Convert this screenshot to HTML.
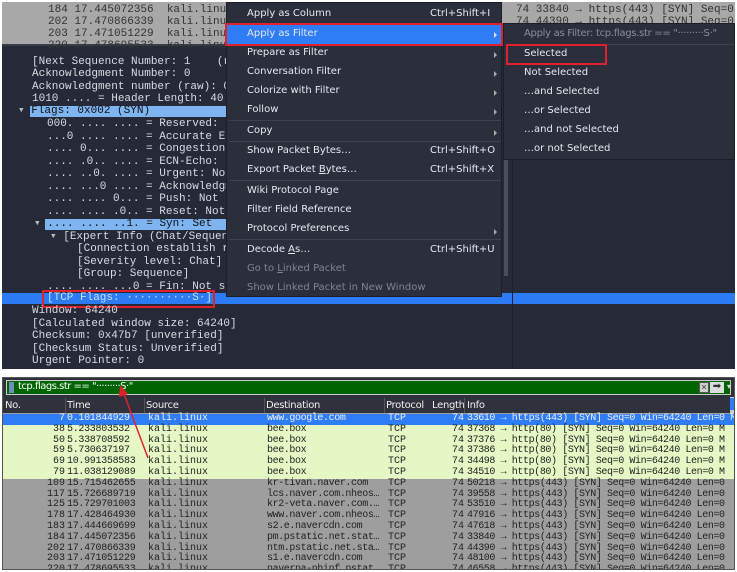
<!DOCTYPE html>
<html><head><meta charset="utf-8"><style>
*{margin:0;padding:0;box-sizing:border-box}
body{width:737px;height:572px;background:#fff;position:relative;overflow:hidden;font-family:"Liberation Sans",sans-serif}
.abs{position:absolute;white-space:pre}
#top{position:absolute;left:2px;top:2px;width:733px;height:367px;background:#262a38;overflow:hidden}
#plist{position:absolute;left:0;top:0;width:733px;height:44px;background:#a8a8a8;border-bottom:2px solid #3a3d48}
.pl{position:absolute;font:11px "Liberation Mono",monospace;color:#333;white-space:pre}
.tr{position:absolute;font:11px "Liberation Mono",monospace;color:#d8dbe2;white-space:pre;height:12.5px;line-height:12.5px}
#menu{position:absolute;left:224px;top:0;width:276px;height:295px;background:#2b2f3c;border:1px solid #1c1f28}
.mi{position:absolute;left:20px;font:10px "DejaVu Sans","Liberation Sans",sans-serif;color:#e6e8ee;white-space:pre}
.sc{position:absolute;left:203px;font:10px "DejaVu Sans",sans-serif;color:#e6e8ee}
.ar{position:absolute;left:267px;width:0;height:0;border-left:3px solid #aaa;border-top:3px solid transparent;border-bottom:3px solid transparent}
.sep{position:absolute;left:2px;width:272px;height:1px;background:#3d4150}
#sub{position:absolute;left:501px;top:21px;width:232px;height:137px;background:#2b2f3c;border:1px solid #1c1f28}
.si{position:absolute;left:20px;font:10px "DejaVu Sans",sans-serif;color:#e6e8ee;white-space:pre}
.red{position:absolute;border:2px solid #e0202a}
#bot{position:absolute;left:2px;top:377px;width:733px;height:193px;background:#9e9e9e;overflow:hidden;border:1px solid #555}
.row{position:absolute;left:0;width:733px;height:10.8px;font:10px "Liberation Mono",monospace;color:#222;white-space:pre;line-height:10.8px}
.row span{position:absolute}
.hd{position:absolute;top:22px;font:10px "DejaVu Sans",sans-serif;color:#eee;letter-spacing:-0.3px}
.hs{position:absolute;top:20px;width:1px;height:15px;background:#555}
</style></head><body>
<div id="top">
 <div id="plist">
  <div class="pl" style="left:46px;top:2px">184 17.445072356  kali.linux</div>
  <div class="pl" style="left:46px;top:14px">202 17.470866339  kali.linux</div>
  <div class="pl" style="left:46px;top:26px">203 17.471051229  kali.linux</div>
  <div class="pl" style="left:46px;top:38px">220 17.478695533  kali.linux</div>
  <div class="pl" style="left:514px;top:2px">74 33840 → https(443) [SYN] Seq=0</div>
  <div class="pl" style="left:514px;top:14px">74 44390 → https(443) [SYN] Seq=0</div>
 </div>
 <div class="tr" style="left:30px;top:54px">[Next Sequence Number: 1    (r</div>
 <div class="tr" style="left:30px;top:66px">Acknowledgment Number: 0</div>
 <div class="tr" style="left:30px;top:79px">Acknowledgment number (raw): 0</div>
 <div class="tr" style="left:30px;top:91px">1010 .... = Header Length: 40</div>
 <div class="abs" style="left:28px;top:104px;width:200px;height:11px;background:#7eb4f0"></div>
 <div class="tr" style="left:16px;top:103px;color:#111"><span style="color:#bbb">▾</span> Flags: 0x002 (SYN)</div>
 <div class="tr" style="left:45px;top:116px">000. .... .... = Reserved: </div>
 <div class="tr" style="left:45px;top:129px">...0 .... .... = Accurate E</div>
 <div class="tr" style="left:45px;top:141px">.... 0... .... = Congestion</div>
 <div class="tr" style="left:45px;top:154px">.... .0.. .... = ECN-Echo: </div>
 <div class="tr" style="left:45px;top:166px">.... ..0. .... = Urgent: No</div>
 <div class="tr" style="left:45px;top:179px">.... ...0 .... = Acknowledgm</div>
 <div class="tr" style="left:45px;top:191px">.... .... 0... = Push: Not </div>
 <div class="tr" style="left:45px;top:204px">.... .... .0.. = Reset: Not</div>
 <div class="abs" style="left:43px;top:217px;width:185px;height:11px;background:#7eb4f0"></div>
 <div class="tr" style="left:32px;top:216px;color:#111"><span style="color:#bbb">▾</span> .... .... ..1. = Syn: Set</div>
 <div class="tr" style="left:48px;top:229px"><span style="color:#bbb">▾</span> [Expert Info (Chat/Sequen</div>
 <div class="tr" style="left:75px;top:241px">[Connection establish r</div>
 <div class="tr" style="left:75px;top:254px">[Severity level: Chat]</div>
 <div class="tr" style="left:75px;top:266px">[Group: Sequence]</div>
 <div class="tr" style="left:45px;top:279px">.... .... ...0 = Fin: Not s</div>
 <div class="abs" style="left:0;top:291px;width:733px;height:11px;background:#2b7bf5"></div>
 <div class="tr" style="left:45px;top:290px;color:#c9dcff">[TCP Flags: ··········S·]</div>
 <div class="red" style="left:40px;top:288px;width:173px;height:18px"></div>
 <div class="tr" style="left:30px;top:303px">Window: 64240</div>
 <div class="tr" style="left:30px;top:316px">[Calculated window size: 64240]</div>
 <div class="tr" style="left:30px;top:328px">Checksum: 0x47b7 [unverified]</div>
 <div class="tr" style="left:30px;top:341px">[Checksum Status: Unverified]</div>
 <div class="tr" style="left:30px;top:353px">Urgent Pointer: 0</div>
 <div class="abs" style="left:502px;top:158px;width:4px;height:116px;background:#4a4e5a"></div>
 <div class="abs" style="left:510px;top:158px;width:1px;height:209px;background:#1e212b"></div>

 <div id="menu">
  <div class="mi" style="top:5px">Apply as Column</div><div class="sc" style="top:5px">Ctrl+Shift+I</div>
  <div class="abs" style="left:0;top:21px;width:274px;height:20px;background:#2e7cf6"></div>
  <div class="mi" style="top:25px">Apply as Filter</div><div class="ar" style="top:29px;border-left-color:#dde"></div>
  <div class="red" style="left:-2px;top:20px;width:278px;height:23px"></div>
  <div class="mi" style="top:44px">Prepare as Filter</div><div class="ar" style="top:49px"></div>
  <div class="mi" style="top:63px">Conversation Filter</div><div class="ar" style="top:68px"></div>
  <div class="mi" style="top:82px">Colorize with Filter</div><div class="ar" style="top:87px"></div>
  <div class="mi" style="top:101px">Follow</div><div class="ar" style="top:106px"></div>
  <div class="sep" style="top:117px"></div>
  <div class="mi" style="top:122px">Copy</div><div class="ar" style="top:127px"></div>
  <div class="sep" style="top:138px"></div>
  <div class="mi" style="top:142px">Show Packet Bytes…</div><div class="sc" style="top:142px">Ctrl+Shift+O</div>
  <div class="mi" style="top:161px">Export Packet <u>B</u>ytes…</div><div class="sc" style="top:161px">Ctrl+Shift+X</div>
  <div class="sep" style="top:177px"></div>
  <div class="mi" style="top:182px">Wiki Protocol Page</div>
  <div class="mi" style="top:201px">Filter Field Reference</div>
  <div class="mi" style="top:220px">Protocol Preferences</div><div class="ar" style="top:226px"></div>
  <div class="sep" style="top:236px"></div>
  <div class="mi" style="top:241px">Decode <u>A</u>s…</div><div class="sc" style="top:241px">Ctrl+Shift+U</div>
  <div class="mi" style="top:260px;color:#80848e">Go to <u>L</u>inked Packet</div>
  <div class="mi" style="top:279px;color:#80848e">Show Linked Packet in New Window</div>
 </div>
 <div id="sub">
  <div class="si" style="top:4px;color:#8a8e98;letter-spacing:-0.3px">Apply as Filter: tcp.flags.str == "·········S·"</div>
  <div class="sep" style="top:20px;width:228px"></div>
  <div class="si" style="top:24px">Selected</div>
  <div class="red" style="left:2px;top:20px;width:101px;height:21px"></div>
  <div class="si" style="top:43px">Not Selected</div>
  <div class="si" style="top:62px">…and Selected</div>
  <div class="si" style="top:81px">…or Selected</div>
  <div class="si" style="top:100px">…and not Selected</div>
  <div class="si" style="top:119px">…or not Selected</div>
 </div>
</div>

<div id="bot">
 <div class="abs" style="left:0;top:0;width:733px;height:19px;background:#2f313a"></div>
 <div class="abs" style="left:3px;top:2px;width:725px;height:15px;background:#006400;border:1px solid #ccc"></div>
 <div class="abs" style="left:6px;top:4px;width:5px;height:11px;background:#6c8fc0"></div>
 <div class="abs" style="left:15px;top:3px;font:10px 'DejaVu Sans',sans-serif;color:#fff;letter-spacing:-0.5px">tcp.flags.str == "·········S·"</div>
 <div class="abs" style="left:696px;top:4px;width:10px;height:11px;background:#ccc;border:1px solid #555;font:9px sans-serif;color:#333;text-align:center;line-height:9px">×</div>
 <div class="abs" style="left:707px;top:4px;width:14px;height:11px;background:#ddd;font:10px sans-serif;color:#333;line-height:10px;text-align:center">➡</div>
 <div class="abs" style="left:724px;top:4px;font:8px sans-serif;color:#ddd">▾</div>
 <div class="abs" style="left:0;top:19px;width:733px;height:16px;background:#2f323c"></div>
 <div class="hd" style="left:2px">No.</div>
 <div class="hs" style="left:62px"></div><div class="hd" style="left:64px">Time</div>
 <div class="hs" style="left:141px"></div><div class="hd" style="left:143px">Source</div>
 <div class="hs" style="left:261px"></div><div class="hd" style="left:263px">Destination</div>
 <div class="hs" style="left:381px"></div><div class="hd" style="left:383px">Protocol</div>
 <div class="hd" style="left:429px">Length</div>
 <div class="hs" style="left:461px"></div><div class="hd" style="left:464px">Info</div>
 <div class="abs" style="left:727px;top:19px;width:6px;height:174px;background:#ccc"></div>
 <div class="abs" style="left:727px;top:20px;width:6px;height:12px;background:#2e7cf6"></div>
 <div id="rows"></div>
 <svg class="abs" style="left:0;top:0" width="733" height="193"><line x1="145" y1="80" x2="121" y2="16" stroke="#e0202a" stroke-width="1.5"/><polygon points="117,7 116,19 125,16" fill="#e0202a"/></svg>
</div>
<script>
var d=[["7","0.101844929","www.google.com","33610 → https(443) [SYN] Seq=0 Win=64240 Len=0 M","s"],
["38","5.233803532","bee.box","37368 → http(80) [SYN] Seq=0 Win=64240 Len=0 M","g"],
["50","5.338708592","bee.box","37376 → http(80) [SYN] Seq=0 Win=64240 Len=0 M","g"],
["59","5.730637197","bee.box","37386 → http(80) [SYN] Seq=0 Win=64240 Len=0 M","g"],
["69","10.991358583","bee.box","34498 → http(80) [SYN] Seq=0 Win=64240 Len=0 M","g"],
["79","11.038129089","bee.box","34510 → http(80) [SYN] Seq=0 Win=64240 Len=0 M","g"],
["109","15.715462655","kr-tivan.naver.com","50218 → https(443) [SYN] Seq=0 Win=64240 Len=0","x"],
["117","15.726689719","lcs.naver.com.nheos…","39558 → https(443) [SYN] Seq=0 Win=64240 Len=0","x"],
["125","15.729701003","kr2-veta.naver.com.…","53510 → https(443) [SYN] Seq=0 Win=64240 Len=0","x"],
["178","17.428464930","www.naver.com.nheos…","47916 → https(443) [SYN] Seq=0 Win=64240 Len=0","x"],
["183","17.444669699","s2.e.navercdn.com","47618 → https(443) [SYN] Seq=0 Win=64240 Len=0","x"],
["184","17.445072356","pm.pstatic.net.stat…","33840 → https(443) [SYN] Seq=0 Win=64240 Len=0","x"],
["202","17.470866339","ntm.pstatic.net.sta…","44390 → https(443) [SYN] Seq=0 Win=64240 Len=0","x"],
["203","17.471051229","s1.e.navercdn.com","48100 → https(443) [SYN] Seq=0 Win=64240 Len=0","x"],
["220","17.478695533","naverpa-phinf.pstat…","46558 → https(443) [SYN] Seq=0 Win=64240 Len=0","x"]];
var h="";d.forEach(function(r,i){var bg=r[4]=="s"?"#2e7cf6":r[4]=="g"?"#e4f7c4":"#9e9e9e";var c=r[4]=="s"?"#eef":"#222";
h+='<div class="row" style="top:'+(36+i*10.8)+'px;background:'+bg+';color:'+c+'"><span style="right:'+(733-62)+'px">'+r[0]+'</span><span style="left:64px;letter-spacing:-0.3px">'+r[1]+'</span><span style="left:145px">kali.linux</span><span style="left:264px;letter-spacing:-0.4px">'+r[2]+'</span><span style="left:385px">TCP</span><span style="left:449px">74</span><span style="left:464px;letter-spacing:-0.4px">'+r[3]+'</span></div>';});
document.getElementById("rows").innerHTML=h;
</script>
</body></html>
